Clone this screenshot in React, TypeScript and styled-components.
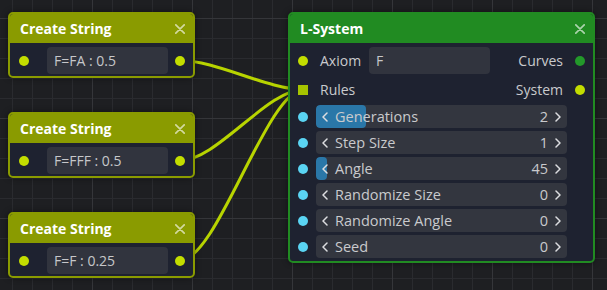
import styled, { createGlobalStyle } from "styled-components";

const GlobalStyle = createGlobalStyle`
  html, body {
    margin: 0;
    padding: 0;
    background: #1e1f22;
  }
  * {
    box-sizing: border-box;
  }
`;

const OLIVE = "#8a9b00";
const GREEN = "#218b22";
const YELLOW = "#c3dd00";
const CYAN = "#5ad4f3";
const LINK = "#b8d400";

interface Point {
  x: number;
  y: number;
}

const links: [Point, Point][] = [
  [{ x: 180, y: 60.5 }, { x: 304, y: 89.5 }],
  [{ x: 180, y: 160.5 }, { x: 304, y: 89.5 }],
  [{ x: 180, y: 260.5 }, { x: 304, y: 89.5 }],
];

function linkPath([a, b]: [Point, Point]) {
  const dx = 0.3 * Math.abs(b.x - a.x);
  return `M ${a.x} ${a.y} C ${a.x + dx} ${a.y}, ${b.x - dx} ${b.y}, ${b.x} ${b.y}`;
}

const strings = [
  { top: 12, text: "F=FA : 0.5" },
  { top: 112, text: "F=FFF : 0.5" },
  { top: 212, text: "F=F : 0.25" },
];

const sliders = [
  { label: "Generations", value: 2, fill: 20 },
  { label: "Step Size", value: 1, fill: 0 },
  { label: "Angle", value: 45, fill: 4.4 },
  { label: "Randomize Size", value: 0, fill: 0 },
  { label: "Randomize Angle", value: 0, fill: 0 },
  { label: "Seed", value: 0, fill: 0 },
];

function CloseIcon() {
  return (
    <svg width="10" height="10" viewBox="0 0 10 10">
      <path d="M0.8 0.8 L9.2 9.2 M9.2 0.8 L0.8 9.2" stroke="rgba(255,255,255,0.62)" strokeWidth="1.7" strokeLinecap="round" />
    </svg>
  );
}

function Chevron({ dir }: { dir: "left" | "right" }) {
  return (
    <svg width="6" height="10" viewBox="0 0 6 10">
      <path
        d={dir === "left" ? "M5 1 L1 5 L5 9" : "M1 1 L5 5 L1 9"}
        fill="none"
        stroke="#dcdde0"
        strokeWidth="1.5"
        strokeLinecap="round"
        strokeLinejoin="round"
      />
    </svg>
  );
}

function Slider({ label, value, fill }: { label: string; value: number; fill: number }) {
  return (
    <SliderBox>
      {fill > 0 && <SliderFill style={{ width: `${fill}%` }} />}
      <Chevron dir="left" />
      <SliderLabel>{label}</SliderLabel>
      <SliderValue>{value}</SliderValue>
      <Chevron dir="right" />
    </SliderBox>
  );
}

export default function App() {
  return (
    <>
      <GlobalStyle />
      <Canvas>
        <Links width="607" height="290">
          {links.map((l, i) => (
            <path key={i} d={linkPath(l)} fill="none" stroke={LINK} strokeWidth="3" />
          ))}
        </Links>

        {strings.map((s) => (
          <Node key={s.top} $left={8} $top={s.top} $width={187} $color={OLIVE}>
            <Header $color={OLIVE}>
              <Title>Create String</Title>
              <CloseIcon />
            </Header>
            <Body>
              <StringRow>
                <Socket $color={YELLOW} />
                <Field $width={121}>{s.text}</Field>
                <Socket $color={YELLOW} />
              </StringRow>
            </Body>
          </Node>
        ))}

        <Node $left={288} $top={12} $width={307} $color={GREEN}>
          <Header $color={GREEN}>
            <Title>L-System</Title>
            <CloseIcon />
          </Header>
          <Body>
            <Row $height={27}>
              <Socket $color={YELLOW} />
              <Middle>
                <Label>Axiom</Label>
                <Field $width={121}>F</Field>
                <Spacer />
                <Label>Curves</Label>
              </Middle>
              <Socket $color="#23992a" />
            </Row>
            <Row $height={25}>
              <Socket $color="#a6c400" $square />
              <Middle>
                <Label>Rules</Label>
                <Spacer />
                <Label>System</Label>
              </Middle>
              <Socket $color={YELLOW} />
            </Row>
            {sliders.map((s) => (
              <Row key={s.label} $height={23}>
                <Socket $color={CYAN} />
                <Slider {...s} />
                <span />
              </Row>
            ))}
          </Body>
        </Node>
      </Canvas>
    </>
  );
}

const Canvas = styled.div`
  position: relative;
  width: 607px;
  height: 290px;
  overflow: hidden;
  font-family: "Open Sans", "Noto Sans", sans-serif;
  background-color: #1e1f22;
  background-image:
    linear-gradient(to right, #35363a 1px, transparent 1px),
    linear-gradient(to bottom, #35363a 1px, transparent 1px),
    linear-gradient(to right, #2a2b2f 1px, transparent 1px),
    linear-gradient(to bottom, #2a2b2f 1px, transparent 1px);
  background-size: 100px 100px, 100px 100px, 20px 20px, 20px 20px;
  background-position: 92px 18px, 92px 18px, 12px 18px, 12px 18px;
`;

const Links = styled.svg`
  position: absolute;
  left: 0;
  top: 0;
`;

const Node = styled.div<{ $left: number; $top: number; $width: number; $color: string }>`
  position: absolute;
  left: ${(p) => p.$left}px;
  top: ${(p) => p.$top}px;
  width: ${(p) => p.$width}px;

  display: flex;
  flex-direction: column;

  border: 2px solid ${(p) => p.$color};
  border-radius: 5px;
  background: #1e2230;
  box-shadow: 0 0 6px rgba(0, 0, 0, 0.45);
  overflow: hidden;
`;

const Header = styled.div<{ $color: string }>`
  height: 29px;
  padding: 0 8px 0 10px;

  display: flex;
  align-items: center;
  justify-content: space-between;

  background: ${(p) => p.$color};
`;

const Title = styled.span`
  font-size: 14px;
  font-weight: 700;
  color: #ffffff;
`;

const Body = styled.div`
  padding: 4px 0 3px;

  display: flex;
  flex-direction: column;
  gap: 3px;
`;

const StringRow = styled.div`
  height: 27px;
  margin-bottom: -1px;
  padding: 0 8px 0 9px;

  display: flex;
  align-items: center;
  gap: 7px;

  & > :nth-child(2) {
    margin-left: 11px;
  }
`;

const Row = styled.div<{ $height: number }>`
  height: ${(p) => p.$height}px;

  display: grid;
  grid-template-columns: 26px 1fr 26px;
  align-items: center;
  justify-items: center;
`;

const Middle = styled.div`
  width: 100%;
  height: 100%;
  padding: 0 4px;

  display: flex;
  align-items: center;
  gap: 8px;
`;

const Spacer = styled.div`
  flex: 1;
`;

const Socket = styled.div<{ $color: string; $square?: boolean }>`
  width: 10px;
  height: 10px;
  flex-shrink: 0;

  border-radius: ${(p) => (p.$square ? "0" : "50%")};
  background: ${(p) => p.$color};
`;

const Label = styled.span`
  font-size: 14px;
  color: #c9cacd;
  white-space: nowrap;
`;

const Field = styled.div<{ $width: number }>`
  width: ${(p) => p.$width}px;
  height: 27px;
  padding-left: 7px;

  display: flex;
  align-items: center;

  border-radius: 4px;
  background: #31343e;

  font-size: 14px;
  color: #c6c7ca;
  white-space: nowrap;
`;

const SliderBox = styled.div`
  position: relative;
  width: 100%;
  height: 23px;
  padding: 0 6px;

  display: flex;
  align-items: center;

  border-radius: 4px;
  background: #33363f;
  overflow: hidden;

  svg {
    position: relative;
    flex-shrink: 0;
  }
`;

const SliderFill = styled.div`
  position: absolute;
  left: 0;
  top: 0;
  bottom: 0;

  border-radius: 4px;
  background: #2a77a8;
`;

const SliderLabel = styled.span`
  position: relative;
  flex: 1;
  margin-left: 7px;

  font-size: 14.5px;
  color: #c9cacd;
  white-space: nowrap;
`;

const SliderValue = styled.span`
  position: relative;
  margin-right: 7px;

  font-size: 14.5px;
  color: #c9cacd;
`;
